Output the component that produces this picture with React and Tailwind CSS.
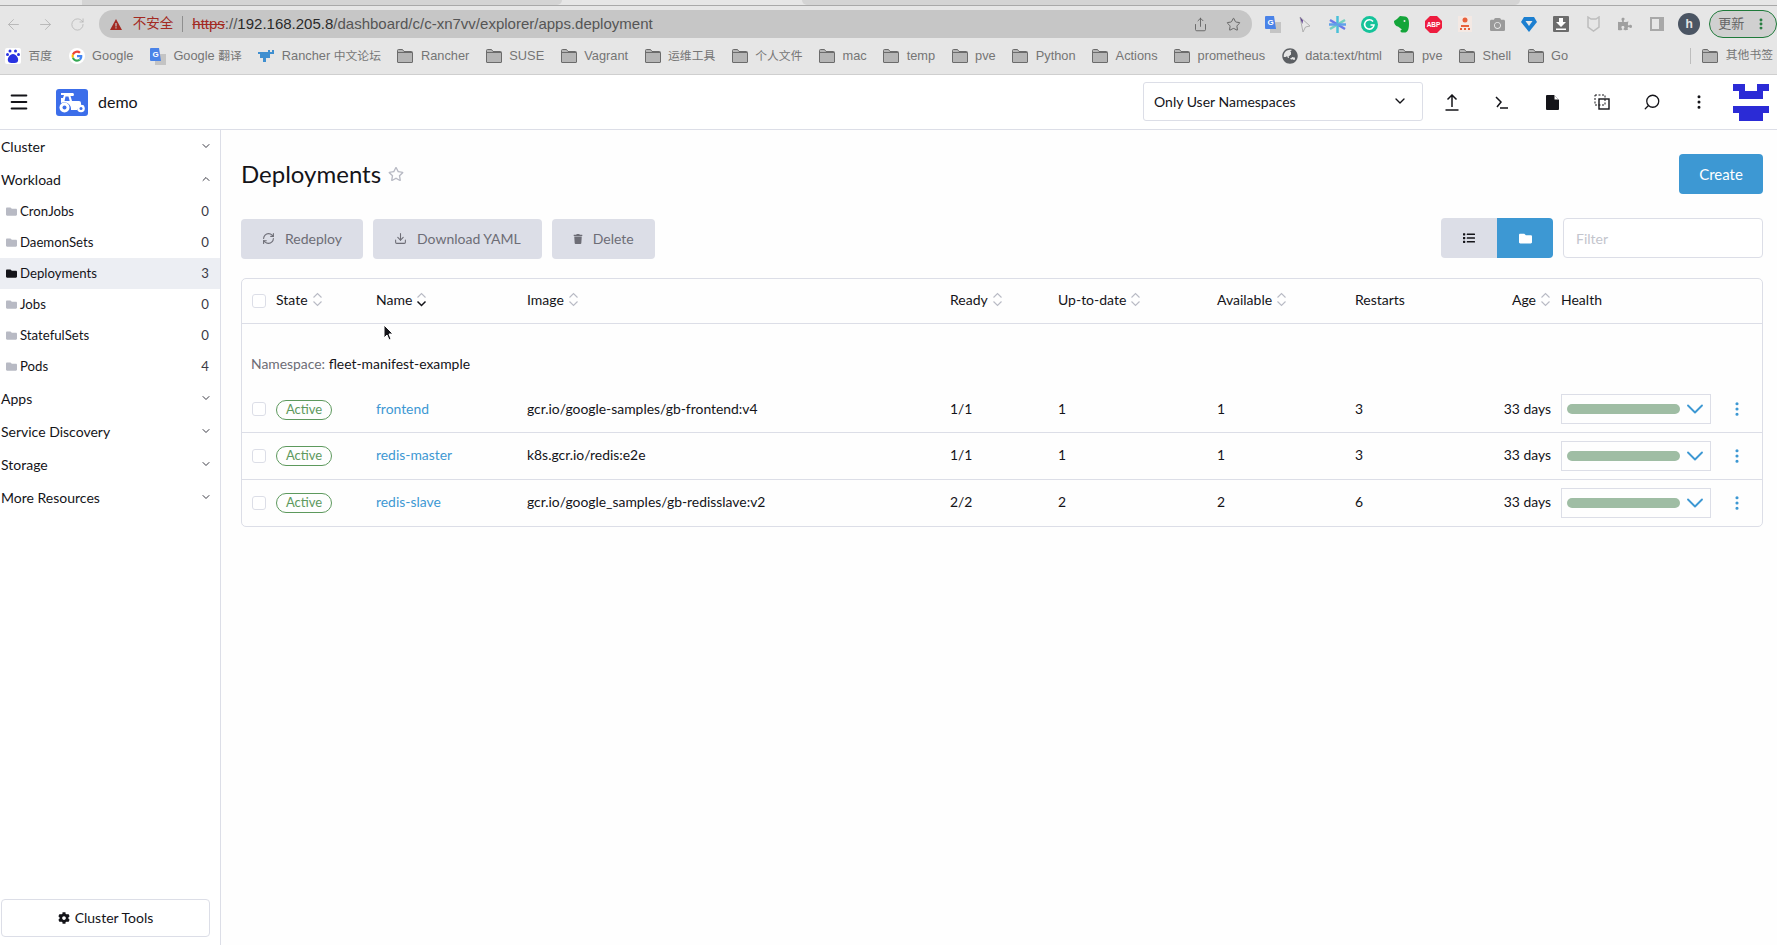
import {
  ArrowLeft,
  ArrowRight,
  RotateCw,
  Share,
  Star,
  ChevronDown,
  ChevronUp,
  Search,
  EllipsisVertical,
  Menu,
  RefreshCw,
  Download,
} from "lucide-react";
import { FaFolder, FaTrash, FaList, FaCog, FaRegStar, FaPuzzlePiece, FaGlobeAsia, FaCamera } from "react-icons/fa";

const chromeFont = "font-['Liberation_Sans','Noto_Sans_CJK_SC',sans-serif]";

const bookmarks = [
  { icon: "baidu", cjk: "百度" },
  { icon: "google", label: "Google" },
  { icon: "translate", label: "Google ", cjk: "翻译" },
  { icon: "rancher", label: "Rancher ", cjk: "中文论坛" },
  { label: "Rancher" },
  { label: "SUSE" },
  { label: "Vagrant" },
  { cjk: "运维工具" },
  { cjk: "个人文件" },
  { label: "mac" },
  { label: "temp" },
  { label: "pve" },
  { label: "Python" },
  { label: "Actions" },
  { label: "prometheus" },
  { icon: "globe", label: "data:text/html" },
  { label: "pve" },
  { label: "Shell" },
  { label: "Go" },
];

const workloads = [
  { name: "CronJobs", count: 0 },
  { name: "DaemonSets", count: 0 },
  { name: "Deployments", count: 3, active: true },
  { name: "Jobs", count: 0 },
  { name: "StatefulSets", count: 0 },
  { name: "Pods", count: 4 },
];

const deployments = [
  { name: "frontend", image: "gcr.io/google-samples/gb-frontend:v4", ready: "1/1", upToDate: 1, available: 1, restarts: 3 },
  { name: "redis-master", image: "k8s.gcr.io/redis:e2e", ready: "1/1", upToDate: 1, available: 1, restarts: 3 },
  { name: "redis-slave", image: "gcr.io/google_samples/gb-redisslave:v2", ready: "2/2", upToDate: 2, available: 2, restarts: 6 },
];

function BookmarkFolder() {
  return (
    <svg width="16" height="14" viewBox="0 0 16 14" className="shrink-0">
      <path d="M.5 13V1.5a1 1 0 0 1 1-1h4l1.5 2h7.500a1 1 0 0 1 1 1V13a.5.5 0 0 1-.5.500H1a.5.500 0 0 1-.5-.5z" fill="#b5b5b5" stroke="#6b6b6b" />
      <path d="M1 3.500h14" stroke="#6b6b6b" />
    </svg>
  );
}

function TranslateIcon() {
  return (
    <svg width="16" height="17" viewBox="0 0 16 17" className="shrink-0">
      <rect x="5" y="6" width="11" height="11" fill="#c4c4c4" />
      <path d="M1 0h8l2 13H1a1 1 0 0 1-1-1V1a1 1 0 0 1 1-1z" fill="#4a83e8" />
      <text x="2.500" y="9" fontSize="8" fontWeight="700" fill="#fff" fontFamily="Liberation Sans">G</text>
    </svg>
  );
}

function BookmarkIcon({ type }) {
  if (type === "baidu") {
    return (
      <svg width="16" height="16" viewBox="0 0 16 16" className="shrink-0">
        <rect width="16" height="16" rx="2" fill="#fff" />
        <circle cx="5" cy="3" r="1.500" fill="#2932e1" />
        <circle cx="10.500" cy="3" r="1.500" fill="#2932e1" />
        <circle cx="2.500" cy="6.500" r="1.500" fill="#2932e1" />
        <circle cx="13.500" cy="6.500" r="1.500" fill="#2932e1" />
        <path d="M8 6c3 0 6 4 5 7-.5 2-3 2-5 2s-4.500 0-5-2C2 10 5 6 8 6z" fill="#2932e1" />
      </svg>
    );
  }
  if (type === "google") {
    return (
      <svg width="16" height="16" viewBox="0 0 48 48" className="shrink-0">
        <circle cx="24" cy="24" r="24" fill="#fff" />
        <path fill="#ea4335" d="M24 14c2.500 0 4.700.9 6.400 2.500l4.800-4.800A16.600 16.600 0 0 0 9 17.500l5.600 4.300C16 17.400 19.600 14 24 14z" />
        <path fill="#4285f4" d="M40 24.500c0-1.200-.1-2.300-.3-3.500H24v6.500h9c-.4 2.100-1.600 3.900-3.400 5.100l5.400 4.200c3.100-2.900 5-7.200 5-12.300z" />
        <path fill="#fbbc05" d="M14.600 26.200a9.700 9.700 0 0 1 0-4.400L9 17.500a16.500 16.500 0 0 0 0 13z" />
        <path fill="#34a853" d="M24 41c4.500 0 8.200-1.500 11-4l-5.400-4.200c-1.500 1-3.400 1.600-5.600 1.600-4.400 0-8-3-9.400-7L9 30.500C11.800 37 17.400 41 24 41z" />
      </svg>
    );
  }
  if (type === "translate") return <TranslateIcon />;
  if (type === "rancher") {
    return (
      <svg width="16" height="14" viewBox="0 0 16 14" className="shrink-0">
        <path d="M0 3h10V1h2v2h2V1h2v4h-4v4H8v4H5V9H2V5H0z" fill="#3f8fd0" />
      </svg>
    );
  }
  if (type === "globe") return <FaGlobeAsia className="shrink-0 text-[16px] text-[#5c5f63]" />;
  return <BookmarkFolder />;
}

function ExtensionIcons() {
  return (
    <div className="ml-[5px] flex items-center text-[#a0a0a0] [&>*]:flex [&>*]:w-[32px] [&>*]:justify-center">
      <span><TranslateIcon /></span>
      <span>
        <svg width="14" height="17" viewBox="0 0 14 17">
          <path d="M2 1l10 9-4.500 1L5 16z" fill="#e8e8e8" stroke="#b0b0b0" />
          <path d="M2 1l3 3.500-.7 3.500z" fill="#5b3d8f" />
        </svg>
      </span>
      <span>
        <svg width="17" height="17" viewBox="0 0 17 17" fill="none" strokeWidth="2.500">
          <path d="M8.500 0v17" stroke="#4ac0d8" />
          <path d="M1 4l15 9" stroke="#6a7be8" />
          <path d="M16 4L1 13" stroke="#74d0c0" />
          <path d="M0 8.500h17" stroke="#5fa0ea" />
        </svg>
      </span>
      <span>
        <svg width="17" height="17" viewBox="0 0 17 17">
          <circle cx="8.500" cy="8.500" r="8.500" fill="#15c39a" />
          <path d="M12 5.500A4.700 4.700 0 1 0 13 9H9.500" fill="none" stroke="#fff" strokeWidth="1.600" />
        </svg>
      </span>
      <span>
        <svg width="15" height="17" viewBox="0 0 15 17">
          <path d="M3 3l3-3 5 .5c3 .5 4 3 4 7s-.5 8-3.500 9H8c-2 0-2-3 0-3l-4-3C1 10 0 7 0 5z" fill="#14a53a" />
          <circle cx="10.500" cy="5" r="1" fill="#e8e8e8" />
        </svg>
      </span>
      <span>
        <svg width="17" height="17" viewBox="0 0 17 17">
          <path d="M5 0h7l5 5v7l-5 5H5l-5-5V5z" fill="#ee1c3f" />
          <text x="8.500" y="11" fontSize="6.500" fontWeight="700" textAnchor="middle" fill="#fff" fontFamily="Liberation Sans">ABP</text>
        </svg>
      </span>
      <span>
        <svg width="14" height="16" viewBox="0 0 14 16">
          <rect width="14" height="16" fill="#f4e9e4" />
          <circle cx="7" cy="4" r="2.500" fill="#e8613c" />
          <path d="M3 9h8v2H3zM2 12h2v2H2zM6 12h2v2H6zM10 12h2v2h-2z" fill="#e8613c" />
        </svg>
      </span>
      <span><FaCamera className="text-[15px] text-[#9a9a9a]" /></span>
      <span>
        <svg width="16" height="15" viewBox="0 0 16 15">
          <path d="M3 0h10l3 5-8 10L0 5z" fill="#1c7fd0" />
          <path d="M4.500 4h7L8 9z" fill="#e8e8e8" />
        </svg>
      </span>
      <span>
        <svg width="16" height="16" viewBox="0 0 16 16">
          <rect width="16" height="16" rx="1" fill="#6c6c6c" />
          <path d="M6 2h4v4h3l-5 5-5-5h3zM3 12.500h10V14H3z" fill="#fff" />
        </svg>
      </span>
      <span>
        <svg width="13" height="16" viewBox="0 0 13 16" fill="none" stroke="#bdbdbd" strokeWidth="1.500">
          <path d="M1 1l3 2h5l3-2v10l-5.500 4L1 11z" />
        </svg>
      </span>
      <span><FaPuzzlePiece className="text-[14px] text-[#a0a0a0]" /></span>
      <span>
        <svg width="14" height="14" viewBox="0 0 14 14" fill="none">
          <rect x="1" y="1" width="12" height="12" stroke="#a8a8a8" strokeWidth="2" />
          <rect x="9" y="1" width="4" height="12" fill="#a8a8a8" />
        </svg>
      </span>
      <span>
        <span className="flex h-[22px] w-[22px] items-center justify-center rounded-full bg-[#4b5563] text-[12px] font-bold text-[#e5e5e5]">h</span>
      </span>
    </div>
  );
}

function BrowserChrome() {
  return (
    <div className={`h-[75px] shrink-0 border-b border-[#cfcfcf] bg-[#e6e6e6] ${chromeFont}`}>
      <div className="flex h-[6px] border-b border-[#a9a9a9]">
        <div className="w-[82px]" />
        <div className="w-[480px] rounded-br-[6px] bg-[#d4d4d4]" />
        <div className="w-[240px]" />
        <div className="w-[718px] rounded-bl-[6px] rounded-br-[6px] bg-[#d4d4d4]" />
      </div>
      <div className="flex h-[32px] items-center pt-[4px] pl-[4px]">
        <ArrowLeft size={17} strokeWidth={1.300} className="ml-[1px] text-[#b5b5b5]" />
        <ArrowRight size={17} strokeWidth={1.300} className="ml-[15px] text-[#b5b5b5]" />
        <RotateCw size={15} strokeWidth={1.300} className="ml-[16px] text-[#b5b5b5]" />
        <div className="ml-[14px] flex h-[28px] w-[1158px] items-center rounded-full bg-[#c6c6c6] pr-[11px] pl-[11px]">
          <svg width="12" height="11" viewBox="0 0 12 11" className="shrink-0">
            <path d="M6 0l6 11H0z" fill="#a32a22" />
            <path d="M5.400 4h1.200v3.500H5.400zM5.400 8.300h1.200v1.200H5.400z" fill="#c6c6c6" />
          </svg>
          <span className="ml-[11px] text-[13.500px] text-[#a32a22]">不安全</span>
          <span className="mx-[9px] h-[16px] w-px bg-[#8f8f8f]" />
          <span className="text-[15px] whitespace-nowrap text-[#555]">
            <span className="text-[#a32a22] line-through">https</span>
            <span>://</span>
            <span className="text-[#2a2a2a]">192.168.205.8</span>
            /dashboard/c/c-xn7vv/explorer/apps.deployment
          </span>
          <Share size={15} strokeWidth={1.400} className="mr-[1px] ml-auto text-[#5f5f5f]" />
          <Star size={15} strokeWidth={1.500} className="ml-[17px] text-[#5f5f5f]" />
        </div>
        <ExtensionIcons />
        <div className="ml-[4px] flex h-[28px] w-[68px] items-center justify-center gap-[10px] rounded-full border border-[#1f7a3a] bg-[#d0d0d0] text-[13px] text-[#666]">
          更新
          <EllipsisVertical size={14} strokeWidth={3} className="text-[#1f7a3a]" />
        </div>
      </div>
      <div className="flex h-[36px] items-center pl-[5px] text-[12.800px] text-[#757575]">
        <div className="flex items-center gap-[16.500px]">
          {bookmarks.map((item, i) => (
            <span key={i} className="flex items-center gap-[7.500px] whitespace-nowrap">
              <BookmarkIcon type={item.icon} />
              <span className="whitespace-pre">
                {item.label}
                {item.cjk && <span className="text-[11.800px]">{item.cjk}</span>}
              </span>
            </span>
          ))}
        </div>
        <div className="ml-auto flex items-center">
          <span className="mr-[11px] h-[16px] w-px bg-[#bdbdbd]" />
          <span className="flex items-center gap-[8px] pr-[4px] whitespace-nowrap">
            <BookmarkFolder />
            <span className="text-[11.800px]">其他书签</span>
          </span>
        </div>
      </div>
    </div>
  );
}

function TractorLogo() {
  return (
    <svg width="32" height="27" viewBox="0 0 32 27">
      <rect width="32" height="27" rx="3" fill="#3c6eea" />
      <path d="M5 4h12l1 1-.5 2h-3l1.500 5h7a2 2 0 0 1 2 2v2h1.500c1 0 1.500.8 1.500 2v1h-6l-1 2h-6a7 7 0 0 0-10-7V9h2l1-3H5z" fill="#fff" />
      <path d="M9.500 7.500h3l1.200 4.500H8.500z" fill="#3c6eea" />
      <circle cx="8.500" cy="18.500" r="5" fill="#fff" />
      <circle cx="8.500" cy="18.500" r="2" fill="#3c6eea" />
      <circle cx="25" cy="19.500" r="3.800" fill="#fff" />
      <circle cx="25" cy="19.500" r="1.500" fill="#3c6eea" />
    </svg>
  );
}

function UserLogo() {
  return (
    <svg width="37" height="37" viewBox="0 0 37 37" className="mr-[7px] ml-[13px]">
      <path d="M0 0h12v7h12V0h12v7h-6v8H6V7H0z" fill="#2b2bd6" />
      <path d="M0 22h36v7h-6v8H6v-8H0z" fill="#2b2bd6" />
    </svg>
  );
}

function HeaderBar() {
  return (
    <div className="flex h-[55px] shrink-0 items-center border-b border-[#dcdee7] bg-white font-['Lato',sans-serif] text-[#141419]">
      <Menu size={22} strokeWidth={2.200} className="ml-[8px]" />
      <div className="ml-[26px]"><TractorLogo /></div>
      <span className="ml-[10px] text-[16px]">demo</span>
      <div className="mb-[2px] ml-auto flex h-[39px] w-[280px] items-center justify-between rounded-[3px] border border-[#dcdee7] pr-[14px] pl-[10px] text-[14px]">
        Only User Namespaces
        <ChevronDown size={16} strokeWidth={2} />
      </div>
      <div className="flex items-center text-[#141419] [&>*]:flex [&>*]:w-[50px] [&>*]:justify-center">
        <span className="ml-[4px]">
          <svg width="14" height="17" viewBox="0 0 14 17" fill="none" stroke="#141419" strokeWidth="1.500">
            <path d="M7 13V1M2.500 5.500L7 1l4.500 4.500M0.500 16h13" />
          </svg>
        </span>
        <span>
          <svg width="14" height="13" viewBox="0 0 14 13" fill="none" stroke="#141419" strokeWidth="1.500">
            <path d="M1 1l5 5-4 5M5 12h8" />
          </svg>
        </span>
        <span>
          <svg width="13" height="15" viewBox="0 0 13 15">
            <path d="M1 0h7l5 5v9a1 1 0 0 1-1 1H1a1 1 0 0 1-1-1V1a1 1 0 0 1 1-1z" fill="#141419" />
            <path d="M8.500 0.500v4h4" fill="#fff" />
          </svg>
        </span>
        <span>
          <svg width="16" height="16" viewBox="0 0 16 16" fill="none" stroke="#141419">
            <rect x="1" y="1" width="10" height="10" strokeDasharray="2 1.500" />
            <rect x="5" y="5" width="10" height="10" strokeWidth="1.400" />
          </svg>
        </span>
        <span><Search size={18} strokeWidth={1.700} className="-scale-x-100" /></span>
        <span className="!w-[43px]"><EllipsisVertical size={18} strokeWidth={2} /></span>
      </div>
      <UserLogo />
    </div>
  );
}

function NavGroup({ label, open }) {
  const Chevron = open ? ChevronUp : ChevronDown;
  return (
    <div className="flex h-[33px] items-center justify-between pr-[8px] pb-[1px] pl-[1px] text-[14px] text-[#141419]">
      {label}
      <Chevron size={12} strokeWidth={2} className="text-[#3a3a44]" />
    </div>
  );
}

function Sidebar() {
  return (
    <aside className="flex w-[221px] shrink-0 flex-col justify-between border-r border-[#dcdee7] pb-[8px] font-['Lato',sans-serif]">
      <div>
        <NavGroup label="Cluster" />
        <NavGroup label="Workload" open />
        {workloads.map((item) => (
          <div
            key={item.name}
            className={`flex h-[31px] items-center pr-[11px] pl-[6px] text-[13.200px] text-[#141419] ${item.active ? "bg-[#eceef3]" : ""}`}
          >
            <FaFolder className={`mr-[3px] text-[11px] ${item.active ? "text-[#141419]" : "text-[#b8bac4]"}`} />
            {item.name}
            <span className="ml-auto text-[#3a3a44]">{item.count}</span>
          </div>
        ))}
        <NavGroup label="Apps" />
        <NavGroup label="Service Discovery" />
        <NavGroup label="Storage" />
        <NavGroup label="More Resources" />
      </div>
      <button className="ml-[1px] flex h-[38px] w-[209px] items-center justify-center gap-[5px] rounded-[4px] border border-[#dcdee7] pb-[1px] text-[14px] text-[#141419]">
        <FaCog className="text-[12px]" />
        Cluster Tools
      </button>
    </aside>
  );
}

function BulkButton({ icon, children }) {
  return (
    <button className="flex h-[40px] items-center gap-[10px] rounded-[4px] bg-[#dcdee7] px-[21px] pb-[1px] text-[14px] text-[#6d6d76]">
      {icon}
      {children}
    </button>
  );
}

function SortIcon({ active }) {
  return (
    <svg width="11" height="15" viewBox="0 0 11 15" fill="none" strokeWidth="1.100" className="ml-[4px] inline-block shrink-0">
      <path d="M1.500 5.500L5.500 1.500 9.500 5.500" stroke="#b9bbc5" />
      <path d="M1.500 9.500L5.500 13.500 9.500 9.500" stroke={active ? "#141419" : "#b9bbc5"} strokeWidth={active ? 1.500 : 1.100} />
    </svg>
  );
}

function Checkbox() {
  return <span className="ml-[10px] block h-[14px] w-[14px] rounded-[3px] border border-[#dcdee7] bg-white" />;
}

function HeaderCell({ label, sort = true, active, right, className = "" }) {
  return (
    <th className={`p-0 pb-[2px] text-[14px] font-normal ${className}`}>
      <span className={`flex items-center ${right ? "justify-end" : ""}`}>
        {label}
        {sort && <SortIcon active={active} />}
      </span>
    </th>
  );
}

function DeploymentsTable() {
  return (
    <div className="mt-[19px] overflow-hidden rounded-[5px] border border-[#dcdee7]">
      <table className="w-full table-fixed text-left text-[13.900px] text-[#141419]">
        <colgroup>
          <col className="w-[34px]" />
          <col className="w-[100px]" />
          <col className="w-[151px]" />
          <col className="w-[423px]" />
          <col className="w-[108px]" />
          <col className="w-[159px]" />
          <col className="w-[138px]" />
          <col className="w-[120px]" />
          <col className="w-[86px]" />
          <col className="w-[150px]" />
          <col />
        </colgroup>
        <thead>
          <tr className="h-[44px] border-b border-[#dcdee7]">
            <th className="p-0"><Checkbox /></th>
            <HeaderCell label="State" />
            <HeaderCell label="Name" active />
            <HeaderCell label="Image" />
            <HeaderCell label="Ready" />
            <HeaderCell label="Up-to-date" />
            <HeaderCell label="Available" />
            <HeaderCell label="Restarts" sort={false} />
            <HeaderCell label="Age" right className="pr-[10px]" />
            <HeaderCell label="Health" sort={false} />
            <th className="p-0" />
          </tr>
        </thead>
        <tbody>
          <tr className="h-[64px]">
            <td colSpan={11} className="pt-[18px] pl-[9px]">
              <span className="text-[#6d6d76]">Namespace: </span>
              fleet-manifest-example
            </td>
          </tr>
          {deployments.map((d, i) => (
            <tr key={d.name} className={`${i === 0 ? "h-[45px]" : "h-[47px]"} ${i < 2 ? "border-b border-[#dcdee7]" : ""}`}>
              <td className="p-0"><Checkbox /></td>
              <td className="p-0">
                <span className="inline-flex h-[20px] w-[56px] items-center justify-center rounded-full border border-[#5d995d] text-[13px] text-[#5d995d]">Active</span>
              </td>
              <td className="p-0 text-[#3d98d3]">{d.name}</td>
              <td className="p-0">{d.image}</td>
              <td className="p-0">{d.ready}</td>
              <td className="p-0">{d.upToDate}</td>
              <td className="p-0">{d.available}</td>
              <td className="p-0">{d.restarts}</td>
              <td className="p-0 pr-[10px] text-right">33 days</td>
              <td className="p-0">
                <div className="flex h-[30px] items-center gap-[1px] border border-[#dcdee7] pl-[5px]">
                  <span className="h-[10px] w-[113px] rounded-full bg-[#9fbda4]" />
                  <ChevronDown size={28} strokeWidth={1.600} className="text-[#3d98d3]" />
                </div>
              </td>
              <td className="p-0 pl-[17px]">
                <EllipsisVertical size={18} strokeWidth={2.200} className="text-[#3d98d3]" />
              </td>
            </tr>
          ))}
        </tbody>
      </table>
    </div>
  );
}

function DeploymentsPage() {
  return (
    <main className="min-w-0 flex-1 bg-[#fefefe] pt-[24px] pr-[14px] pl-[20px] font-['Lato',sans-serif] text-[#141419]">
      <div className="flex h-[40px] items-center justify-between">
        <h1 className="-mt-[1px] flex items-center gap-[7px] text-[24px] font-normal">
          Deployments
          <FaRegStar className="text-[16px] text-[#b8bac4]" />
        </h1>
        <button className="h-[40px] w-[84px] rounded-[4px] bg-[#3d98d3] text-[15px] text-white">Create</button>
      </div>
      <div className="mt-[24px] flex items-start">
        <div className="mt-[1px] flex gap-[10px]">
          <BulkButton icon={<RefreshCw size={13} strokeWidth={2} />}>Redeploy</BulkButton>
          <BulkButton icon={<Download size={13} strokeWidth={2} />}>Download YAML</BulkButton>
          <BulkButton icon={<FaTrash className="text-[10px]" />}>Delete</BulkButton>
        </div>
        <div className="ml-auto flex h-[40px] w-[112px] overflow-hidden rounded-[4px]">
          <span className="flex w-[56px] items-center justify-center bg-[#dcdee7]"><FaList className="text-[12px]" /></span>
          <span className="flex w-[56px] items-center justify-center bg-[#3d98d3] text-white"><FaFolder className="text-[13px]" /></span>
        </div>
        <input
          placeholder="Filter"
          className="ml-[10px] h-[40px] w-[200px] rounded-[4px] border border-[#dcdee7] bg-white px-[12px] text-[14px] placeholder:text-[#c3c5cd]"
        />
      </div>
      <DeploymentsTable />
    </main>
  );
}

export default function App() {
  return (
    <div className="relative flex h-[945px] w-[1777px] flex-col overflow-hidden bg-white">
      <BrowserChrome />
      <HeaderBar />
      <div className="flex min-h-0 flex-1">
        <Sidebar />
        <DeploymentsPage />
      </div>
      {/* mouse pointer caught in the screenshot */}
      <svg width="12" height="17" viewBox="0 0 12 17" className="absolute top-[324px] left-[383px]">
        <path d="M1 1v13l3-3 2 5 2-1-2-5h4z" fill="#141419" stroke="#fff" />
      </svg>
    </div>
  );
}
